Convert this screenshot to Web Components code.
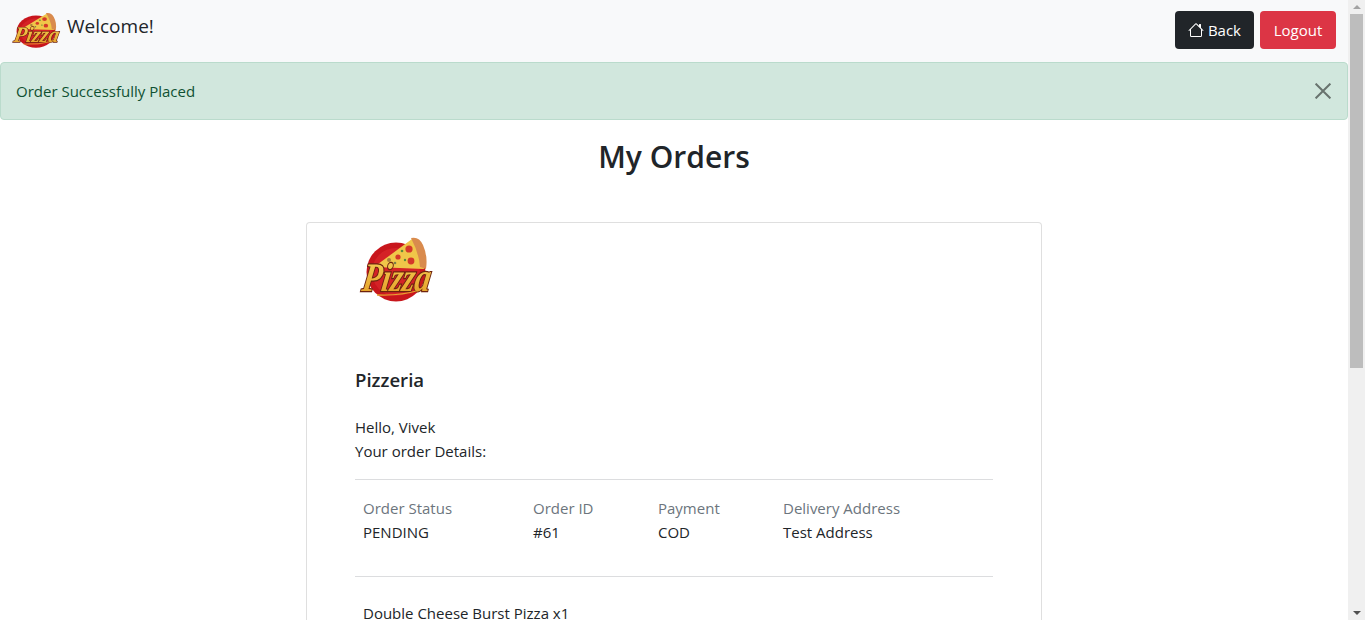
<!DOCTYPE html>
<html lang="en"><head><meta charset="utf-8"><title>My Orders</title>
<style>
html,body{margin:0;padding:0;height:620px;overflow:hidden;background:#fff}
body{display:flex;font-family:"Open Sans","Liberation Sans",sans-serif;color:#212529}
</style></head><body>
<order-page></order-page>
<fake-scrollbar></fake-scrollbar>
<script>
function def(name,html,setup){customElements.define(name,class extends HTMLElement{
  constructor(){super();this.attachShadow({mode:'open'}).innerHTML=html;}
  connectedCallback(){setup&&setup(this)}
});}
const FONT='font-family:"Open Sans","Liberation Sans",sans-serif;';
def('pizza-logo',`<style>:host{display:block;width:var(--w,76px);height:var(--h,66px);flex:none}svg{display:block;width:100%;height:100%}
text{font-family:"Liberation Serif",serif;font-style:italic;font-weight:700}</style>
<svg viewBox="0 0 76 66" preserveAspectRatio="none" aria-label="Pizza logo">
<defs><filter id="b" x="-5%" y="-5%" width="110%" height="110%"><feGaussianBlur stdDeviation=".45"/></filter>
<linearGradient id="g" x1="0" y1="0" x2="0" y2="1"><stop offset="0" stop-color="#f7d35a"/><stop offset="1" stop-color="#e39a22"/></linearGradient></defs>
<g filter="url(#b)">
<circle cx="38" cy="36" r="29.5" fill="#c8171f"/><circle cx="38" cy="36" r="24" fill="#d9262b" opacity=".7"/>
<path d="M16 31 L54 3 Q63 14 66 33 Z" fill="#f0c648"/>
<path d="M53 2 Q61 0 65 9 Q70 20 68 33 L62 31 Q61 17 53 2 Z" fill="#d98b4e"/>
<circle cx="51" cy="13" r="3.6" fill="#d4382a"/><circle cx="40" cy="21" r="2.6" fill="#d4382a"/><circle cx="53" cy="25" r="3.4" fill="#d4382a"/><circle cx="31" cy="24" r="2" fill="#a9803c"/>
<circle cx="44" cy="15" r="1.3" fill="#5d8a3a"/><circle cx="47" cy="24" r="1.2" fill="#5d8a3a"/><circle cx="37" cy="27" r="1.3" fill="#7c7d4a"/>
<text transform="translate(37,55) skewX(-9) scale(1,1.5)" text-anchor="middle" font-size="27" textLength="68" lengthAdjust="spacingAndGlyphs" fill="url(#g)" stroke="#6e2410" stroke-width="1.6" paint-order="stroke">Pizza</text>
<path d="M19 59 Q42 60 62 54" fill="none" stroke="#e8a030" stroke-width="1.3"/>
</g></svg>`);
def('nav-bar',`<style>:host{display:flex;justify-content:space-between;align-items:flex-start;height:62px;box-sizing:border-box;background:#f8f9fa;padding:11px 12px 0 11px;${FONT}}
.brand{display:flex;gap:6px;color:#212529;font-size:19px;line-height:30px}
pizza-logo{--w:50px;--h:36px;margin-top:1px}.r{display:flex;gap:6px}</style>
<div class="brand"><pizza-logo></pizza-logo><span>Welcome!</span></div><div class="r"><slot></slot></div>`);
def('ui-button',`<style>:host{display:inline-flex;align-items:center;justify-content:center;gap:4px;height:38px;min-width:76px;box-sizing:border-box;padding:0 13px;border-radius:4px;font-size:15px;color:#fff;background:var(--bg);${FONT}}
::slotted(*){display:block}</style><slot></slot>`);
def('alert-box',`<style>:host{display:flex;justify-content:space-between;align-items:center;box-sizing:border-box;height:58px;padding:0 16px 0 15px;background:#d1e7dd;border:1px solid #badbcc;border-radius:4px;color:#0f5132;font-size:15px;line-height:24px;${FONT}}
svg{display:block;width:16px;height:16px}</style><slot></slot>
<svg viewBox="0 0 16 16"><path d="M.6.6l14.8 14.8M15.4.6L.6 15.4" stroke="#000" stroke-opacity=".5" stroke-width="2" fill="none"/></svg>`);
def('order-info',`<style>:host{display:grid;grid-template-columns:170px 125px 125px 1fr;grid-auto-rows:24px;align-content:start;padding:16px 8px 0;font-size:15px;line-height:24px;height:98px;box-sizing:border-box;border-top:1px solid #dcdddf;border-bottom:1px solid #dcdddf;${FONT}}
.m{color:#6c757d}</style>
<div class="m">Order Status</div><div class="m">Order ID</div><div class="m">Payment</div><div class="m">Delivery Address</div>
<div>PENDING</div><div>#61</div><div>COD</div><div>Test Address</div>`);
def('order-card',`<style>:host{display:block;width:736px;box-sizing:border-box;border:1px solid rgba(0,0,0,.125);border-radius:4px;padding:13px 48px 24px;background:#fff;color:#212529;font-size:15px;line-height:24px;${FONT}}
pizza-logo{margin-left:3px}h5{margin:66px 0 0;font-size:18.6px;line-height:24px;font-weight:600}
p{margin:23px 0 16px}.items{padding:29px 8px 0;line-height:14px}</style>
<pizza-logo></pizza-logo><h5>Pizzeria</h5><p>Hello, Vivek<br>Your order Details:</p>
<order-info></order-info><div class="items">Double Cheese Burst Pizza x1</div>`);
def('order-page',`<style>:host{display:block;flex:1;min-width:0;height:620px;overflow:hidden;${FONT}}
h1{margin:18px 0 46px;font-size:30px;line-height:38px;font-weight:600;text-align:center;color:#212529}
.c{display:flex;justify-content:center}</style>
<nav-bar><ui-button style="--bg:#212529"><svg viewBox="0 0 16 16" width="16" height="16" fill="#fff" style="display:block"><path d="M8.707 1.5a1 1 0 0 0-1.414 0L.646 8.146a.5.5 0 0 0 .708.708L2 8.207V13.5A1.5 1.5 0 0 0 3.5 15h9a1.5 1.5 0 0 0 1.5-1.5V8.207l.646.647a.5.5 0 0 0 .708-.708L13 5.793V2.5a.5.5 0 0 0-.5-.5h-1a.5.5 0 0 0-.5.5v1.293L8.707 1.5ZM13 7.207V13.5a.5.5 0 0 1-.5.5h-9a.5.5 0 0 1-.5-.5V7.207l5-5 5 5Z"/></svg><span>Back</span></ui-button><ui-button style="--bg:#dc3545">Logout</ui-button></nav-bar>
<alert-box>Order Successfully Placed</alert-box>
<h1>My Orders</h1><div class="c"><order-card></order-card></div>`);
def('fake-scrollbar',`<style>:host{display:flex;flex-direction:column;width:17px;height:620px;flex:none;background:#f0f0f0;align-items:center}
.a{height:14px;display:flex;align-items:center;justify-content:center;flex:none}
.t{width:13px;height:354px;background:#bdbdbd;flex:none}.s{flex:1}
i{display:block;width:0;height:0;border-left:4px solid transparent;border-right:4px solid transparent}
.u{border-bottom:4px solid #a3a3a3}.d{border-top:4px solid #505050}</style>
<div class="a"><i class="u"></i></div><div class="t"></div><div class="s"></div><div class="a"><i class="d"></i></div>`);
</script></body></html>
